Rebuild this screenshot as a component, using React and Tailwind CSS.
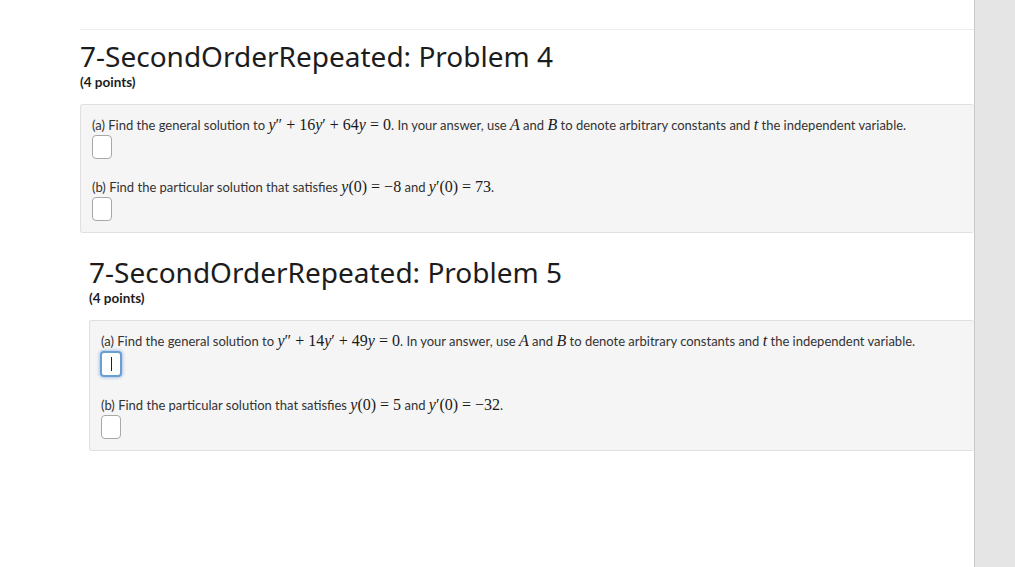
function V({ children }) {
  return <i className="italic">{children}</i>;
}

function Op({ children }) {
  return <span className="px-[4px]">{children}</span>;
}

function M({ children }) {
  return (
    <span className="font-['Liberation_Serif',serif] text-[16px] leading-none text-[#1a1a1a]">
      {children}
    </span>
  );
}

function AnswerBox({ focused }) {
  if (focused) {
    return (
      <div className="-ml-px flex h-[26px] w-[22px] items-center justify-center rounded-[4px] border-2 border-[#6a9fd4] bg-white shadow-[0_0_3px_1px_rgba(80,140,210,0.45)]">
        <span className="h-[14px] w-px bg-[#222]" />
      </div>
    );
  }
  return <div className="h-[24px] w-[20px] rounded-[4px] border border-[#a8a8a8] bg-white" />;
}

function Problem({ number, eqA, condB, focused, className }) {
  return (
    <section className={className}>
      <h2 className="font-['Noto_Sans',sans-serif] text-[28px] leading-[34px] text-[#1c1c1c]">
        7-SecondOrderRepeated: Problem {number}
      </h2>
      <div className="text-[13.5px] font-bold leading-[18px] text-[#1c1c1c]">(4 points)</div>
      <div className="mt-[13px] rounded-[3px] border border-r-0 border-[#e0e0e0] bg-[#f5f5f5] pb-[11px] pl-[11px] pt-[11px] text-[13px] text-[#333]">
        <p className="leading-[18px]">
          (a) Find the general solution to {eqA}. In your answer, use <M><V>A</V></M> and{' '}
          <M><V>B</V></M> to denote arbitrary constants and <M><V>t</V></M> the independent variable.
        </p>
        <div className="mt-px">
          <AnswerBox focused={focused} />
        </div>
        <p className="mt-[19px] leading-[18px]">(b) Find the particular solution that satisfies {condB}.</p>
        <div className="mt-px">
          <AnswerBox />
        </div>
      </div>
    </section>
  );
}

export default function App() {
  return (
    <div className="flex h-[567px] w-full overflow-hidden bg-white font-['Lato',sans-serif]">
      <main className="flex-1 pl-[80px] pt-[29px]">
        <div className="border-t border-[#ececec] pt-[9px]">
          <Problem
            number={4}
            eqA={
              <M>
                <V>y</V>″<Op>+</Op>16<V>y</V>′<Op>+</Op>64<V>y</V>
                <Op>=</Op>0
              </M>
            }
            condB={
              <>
                <M>
                  <V>y</V>(0)<Op>=</Op>−8
                </M>{' '}
                and{' '}
                <M>
                  <V>y</V>′(0)<Op>=</Op>73
                </M>
              </>
            }
          />
          <Problem
            className="ml-[9px] mt-[22px]"
            number={5}
            focused
            eqA={
              <M>
                <V>y</V>″<Op>+</Op>14<V>y</V>′<Op>+</Op>49<V>y</V>
                <Op>=</Op>0
              </M>
            }
            condB={
              <>
                <M>
                  <V>y</V>(0)<Op>=</Op>5
                </M>{' '}
                and{' '}
                <M>
                  <V>y</V>′(0)<Op>=</Op>−32
                </M>
              </>
            }
          />
        </div>
      </main>
      <aside className="w-[41px] shrink-0 border-l border-[#c8c8c8] bg-[#e5e5e5]" />
    </div>
  );
}
